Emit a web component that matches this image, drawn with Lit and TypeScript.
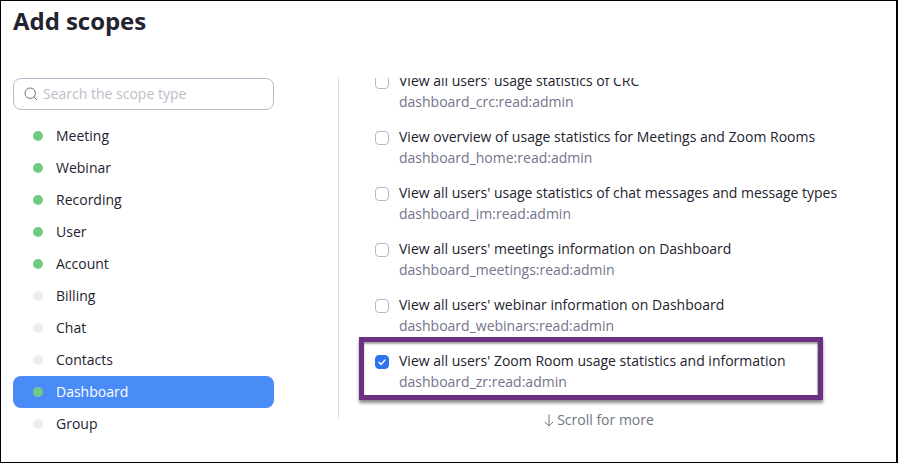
import { LitElement, html, css } from "lit";
import { customElement } from "lit/decorators.js";

const cats: [string, boolean][] = [
  ["Meeting", true], ["Webinar", true], ["Recording", true], ["User", true], ["Account", true],
  ["Billing", false], ["Chat", false], ["Contacts", false], ["Dashboard", true], ["Group", false],
];
const scopes: [string, string, boolean][] = [
  ["View all users' usage statistics of CRC", "dashboard_crc:read:admin", false],
  ["View overview of usage statistics for Meetings and Zoom Rooms", "dashboard_home:read:admin", false],
  ["View all users' usage statistics of chat messages and message types", "dashboard_im:read:admin", false],
  ["View all users' meetings information on Dashboard", "dashboard_meetings:read:admin", false],
  ["View all users' webinar information on Dashboard", "dashboard_webinars:read:admin", false],
  ["View all users' Zoom Room usage statistics and information", "dashboard_zr:read:admin", true],
];

@customElement("app-root")
export class AppRoot extends LitElement {
  static styles = css`
    :host { display: block; width: 898px; height: 463px; font-family: "Open Sans", sans-serif; color: #23232f; }
    * { box-sizing: border-box; }
    .frame { position: relative; width: 898px; height: 463px; background: #fff; border: solid #000; border-width: 1px 2px 1px 1px; padding: 0 0 0 12px; overflow: hidden; }
    h1 { margin: 0; height: 77px; padding-top: 2px; font-size: 24px; line-height: 36px; font-weight: 700; color: #23232f; letter-spacing: -0.05px; }
    .body { display: flex; }
    .left { width: 261px; flex: none; }
    .search { height: 32px; border: 1px solid #bab9cc; border-radius: 8px; display: flex; align-items: center; gap: 5px; padding-left: 10px; font-size: 14px; color: #bdbdc9; margin-bottom: 10px; }
    .search svg { display: block; flex: none; }
    .search span, .cat span:last-child { margin-top: -2px; }
    .cat { height: 32px; display: flex; align-items: center; padding-left: 20px; gap: 13px; font-size: 14px; border-radius: 8px; color: #23232f; }
    .cat.active { background: #4a8cf7; color: #fff; }
    .dot { width: 10px; height: 10px; border-radius: 50%; background: #edeef3; flex: none; }
    .dot.on { background: #6fcb84; }
    .rule { width: 1px; height: 340px; margin-left: 64px; background: #dcdcec; flex: none; }
    .right { margin-left: 36px; width: 500px; display: flex; flex-direction: column; }
    .list { height: 327px; overflow: hidden; }
    .inner { margin-top: -8px; }
    .row { height: 56px; display: flex; gap: 10px; }
    .box { width: 14px; height: 14px; margin-top: 5px; border: 1px solid #bab9cc; border-radius: 4px; background: #fff; flex: none; display: flex; align-items: center; justify-content: center; }
    .box.on { background: #2d73ee; border-color: #2d73ee; }
    .title { font-size: 14px; line-height: 22px; color: #23232f; white-space: nowrap; }
    .sub { font-size: 14px; line-height: 20px; color: #74748a; white-space: nowrap; }
    .more { height: 30px; width: 448px; display: flex; align-items: center; justify-content: center; gap: 3px; font-size: 14px; color: #6e7680; }
    .more svg { display: block; flex: none; }
    .more span { margin-top: -1px; }
    .mark { position: absolute; left: 358px; top: 336px; width: 464px; height: 63px; border: 5px solid #6b2f84; box-shadow: 0 3px 3px rgba(0,0,0,.45), inset 0 2px 2px rgba(0,0,0,.35), inset -1px 0 1px rgba(0,0,0,.25); }
  `;

  render() {
    return html`<div class="frame">
      <h1>Add scopes</h1>
      <div class="body">
        <div class="left">
          <div class="search">
            <svg width="14" height="14" viewBox="0 0 14 14" fill="none" stroke="#6e6e7e" stroke-width="1"><circle cx="6.2" cy="6.2" r="5.2"/><path d="M10 10l3 3"/></svg>
            <span>Search the scope type</span>
          </div>
          ${cats.map(([n, on]) => html`<div class="cat ${n === "Dashboard" ? "active" : ""}"><span class="dot ${on ? "on" : ""}"></span><span>${n}</span></div>`)}
        </div>
        <div class="rule"></div>
        <div class="right">
          <div class="list"><div class="inner">
            ${scopes.map(([t, s, on]) => html`<div class="row">
              <span class="box ${on ? "on" : ""}">${on ? html`<svg width="10" height="10" viewBox="0 0 10 10" fill="none" stroke="#fff" stroke-width="1.4" stroke-linecap="round" stroke-linejoin="round"><path d="M2 5.2l2.2 2.2L8 3"/></svg>` : ""}</span>
              <div><div class="title">${t}</div><div class="sub">${s}</div></div>
            </div>`)}
          </div></div>
          <div class="more">
            <svg width="10" height="13" viewBox="0 0 10 13" fill="none" stroke="#6e7680" stroke-width="1"><path d="M5 .5v11.5M.8 7.8L5 12l4.2-4.2"/></svg>
            <span>Scroll for more</span>
          </div>
        </div>
      </div>
      <div class="mark"></div>
    </div>`;
  }
}
